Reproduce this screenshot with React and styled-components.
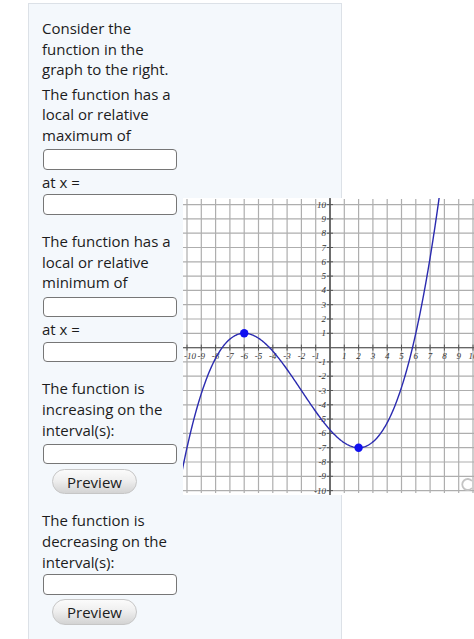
import React from 'react'
import styled, { createGlobalStyle } from 'styled-components'

const GlobalStyle = createGlobalStyle`
  html, body {
    margin: 0;
    padding: 0;
    background: #ffffff;
    overflow: hidden;
  }
  body {
    font-family: "Open Sans", "Liberation Sans", sans-serif;
    color: #1c1c1c;
  }
`

// graph geometry (px inside the svg)
const GW = 310
const GH = 297
const OX = 147
const OY = 149.6
const U = 14.3

const f = (x) => (3 / 32) * (x * x * x / 3 + 2 * x * x - 12 * x) - 5.75

const curvePath = () => {
  const pts = []
  for (let x = -10.4; x <= 8; x += 0.05) {
    pts.push(`${(OX + x * U).toFixed(2)},${(OY - f(x) * U).toFixed(2)}`)
  }
  return 'M' + pts.join(' L')
}

const ticks = Array.from({ length: 21 }, (_, i) => i - 10)

const Graph = () => (
  <GraphSvg width={GW} height={GH} viewBox={`0 0 ${GW} ${GH}`}>
    <rect x="0" y="0" width={GW} height={GH} fill="#fff" />
    {ticks.map((k) => (
      <line key={'v' + k} x1={OX + k * U} y1="1" x2={OX + k * U} y2={GH - 2} stroke="#aeaeae" strokeWidth="1.2" />
    ))}
    {ticks.map((k) => (
      <line key={'h' + k} x1="0" y1={OY - k * U} x2={GW} y2={OY - k * U} stroke="#aeaeae" strokeWidth="1.2" />
    ))}
    <line x1="0" y1={OY} x2={GW} y2={OY} stroke="#666" strokeWidth="1.3" />
    <line x1={OX} y1="0" x2={OX} y2={GH} stroke="#555" strokeWidth="1.6" />
    {ticks.filter((k) => k !== 0).map((k) => (
      <g key={'t' + k}>
        <line x1={OX + k * U} y1={OY - 3} x2={OX + k * U} y2={OY + 3} stroke="#555" strokeWidth="1" />
        <line x1={OX - 3} y1={OY - k * U} x2={OX + 3} y2={OY - k * U} stroke="#555" strokeWidth="1" />
        <AxisLabel
          x={k === -10 ? 1 : OX + k * U}
          y={OY + 11}
          textAnchor={k === -10 ? 'start' : 'middle'}
        >
          {k}
        </AxisLabel>
        <AxisLabel x={OX - 4} y={OY - k * U + 3} textAnchor="end">{k}</AxisLabel>
      </g>
    ))}
    <path d={curvePath()} fill="none" stroke="#2b2bb0" strokeWidth="1.4" />
    <circle cx={OX - 6 * U} cy={OY - 1 * U} r="4.2" fill="#1010f0" />
    <circle cx={OX + 2 * U} cy={OY + 7 * U} r="4.2" fill="#1010f0" />
    <path d="M289 283 A5.5 5.5 0 1 0 289 290" fill="none" stroke="#c4c4c4" strokeWidth="1.8" />
  </GraphSvg>
)

const Question = ({ lines, children }) => (
  <Block>
    {lines.map((t, i) => (
      <Text key={i} $gap={i > 0}>{t}</Text>
    ))}
    {children}
  </Block>
)

export default function App() {
  return (
    <>
      <GlobalStyle />
      <Page>
        <Panel>
          <LeftColumn>
            <Question lines={['Consider the function in the graph to the right.', 'The function has a local or relative maximum of']}>
              <AnswerBox />
              <AtLabel>at x =</AtLabel>
              <AnswerBox $tight />
            </Question>
            <Question lines={['The function has a local or relative minimum of']}>
              <AnswerBox />
              <AtLabel>at x =</AtLabel>
              <AnswerBox $tight />
            </Question>
            <Question lines={['The function is increasing on the interval(s):']}>
              <AnswerBox />
              <PreviewButton>Preview</PreviewButton>
            </Question>
            <Question lines={['The function is decreasing on the interval(s):']}>
              <AnswerBox $tight />
              <PreviewButton>Preview</PreviewButton>
            </Question>
          </LeftColumn>
          <GraphColumn>
            <Graph />
          </GraphColumn>
        </Panel>
      </Page>
    </>
  )
}

const Page = styled.div`
  width: 100vw;
  height: 100vh;
  overflow: hidden;
  padding-top: 3px;
  box-sizing: border-box;
`

const Panel = styled.div`
  display: flex;
  align-items: flex-start;
  margin-left: 28px;
  width: 314px;
  min-height: calc(100vh - 3px);
  box-sizing: border-box;
  padding: 14px 0 0 13px;
  background: #f4f8fc;
  border: 1px solid #dce1e7;
  border-bottom: none;
`

const LeftColumn = styled.div`
  flex: none;
  width: 141px;
  display: flex;
  flex-direction: column;
  gap: 16px;
`

const GraphColumn = styled.div`
  flex: none;
  padding-top: 180px;
`

const GraphSvg = styled.svg`
  display: block;
`

const AxisLabel = styled.text`
  font-family: "Liberation Serif", "DejaVu Serif", serif;
  font-style: italic;
  font-size: 9px;
  fill: #333;
`

const Block = styled.div`
  display: flex;
  flex-direction: column;
  align-items: flex-start;
`

const Text = styled.p`
  margin: ${(p) => (p.$gap ? '3.5px' : '0')} 0 0;
  font-size: 15px;
  line-height: 20.7px;
  color: #1c1c1c;
`

const AtLabel = styled.div`
  margin-top: 2px;
  font-size: 15px;
  line-height: 20.7px;
  color: #1c1c1c;
`

const AnswerBox = styled.input.attrs({ type: 'text' })`
  box-sizing: border-box;
  width: 134px;
  height: 20.5px;
  margin: ${(p) => (p.$tight ? '2px' : '3.5px')} 0 0 1px;
  padding: 0 4px;
  border: 1.3px solid #767676;
  border-radius: 4px;
  background: #fff;
  outline: none;
`

const PreviewButton = styled.button`
  margin: 4.5px 0 0 10px;
  width: 85px;
  height: 25.5px;
  padding: 0;
  border: 1px solid #c6c6c6;
  border-radius: 13px;
  background: linear-gradient(#fbfbfb, #efefef 45%, #d3d3d3);
  font-family: "Open Sans", "Liberation Sans", sans-serif;
  font-size: 15px;
  color: #1c1c1c;
  cursor: pointer;
`
